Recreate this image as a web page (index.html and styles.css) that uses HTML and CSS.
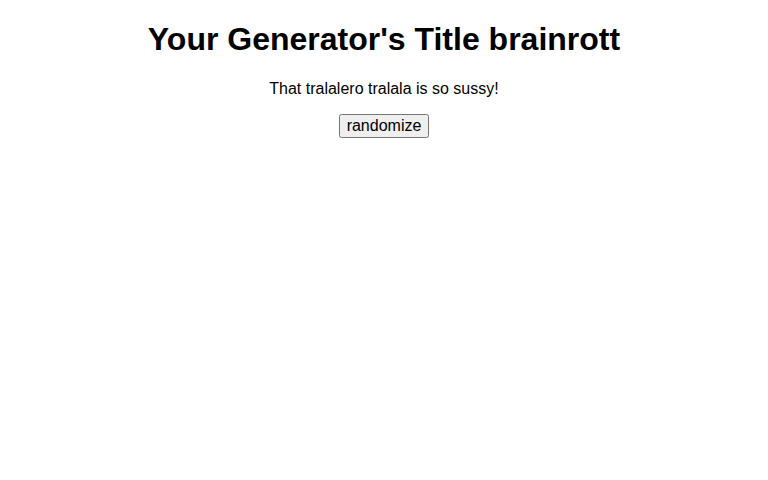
FILE: index.html
```html
<!DOCTYPE html>
<html lang="en">
<head>
  <meta charset="UTF-8" />
  <meta name="viewport" content="width=device-width, initial-scale=1.0"/>
  <title>Generator</title>
  <link rel="stylesheet" href="styles.css">
</head>
<body>
  <h1>Your Generator's Title brainrott</h1>
  <p id="output">That tralalero tralala is so sussy!</p>
  <button id="randomize-btn">randomize</button>
</body>
</html>
```

FILE: styles.css
```css
body {
  margin: 0;
  font-family: "Liberation Sans", Arial, sans-serif;
  text-align: center;
}

button {
  font-family: "Liberation Sans", Arial, sans-serif;
  font-size: 16px;
}
```
